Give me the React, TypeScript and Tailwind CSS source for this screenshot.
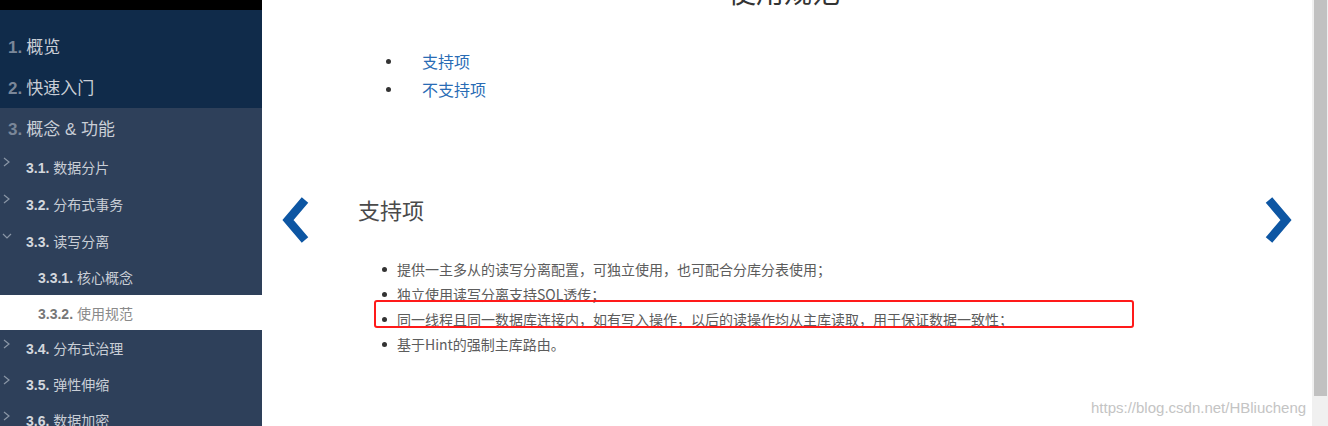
import React from 'react';

const cjk = { fontFamily: '"Noto Sans CJK SC", "Noto Sans", sans-serif' };
const mixed = { fontFamily: '"Liberation Sans", "Noto Sans CJK SC", sans-serif' };

type Sub = { num: string; label: string; chevron?: 'right' | 'down'; indent?: boolean; active?: boolean; h: string };

const subs: Sub[] = [
  { num: '3.1.', label: '数据分片', chevron: 'right', h: 'h-[37px]' },
  { num: '3.2.', label: '分布式事务', chevron: 'right', h: 'h-[37px]' },
  { num: '3.3.', label: '读写分离', chevron: 'down', h: 'h-[37px]' },
  { num: '3.3.1.', label: '核心概念', indent: true, h: 'h-[36px]' },
  { num: '3.3.2.', label: '使用规范', indent: true, active: true, h: 'h-[35px]' },
  { num: '3.4.', label: '分布式治理', chevron: 'right', h: 'h-[36px]' },
  { num: '3.5.', label: '弹性伸缩', chevron: 'right', h: 'h-[36px]' },
  { num: '3.6.', label: '数据加密', chevron: 'right', h: 'h-[36px]' },
];

const items = [
  '提供一主多从的读写分离配置，可独立使用，也可配合分库分表使用；',
  '独立使用读写分离支持SQL透传；',
  '同一线程且同一数据库连接内，如有写入操作，以后的读操作均从主库读取，用于保证数据一致性；',
  '基于Hint的强制主库路由。',
];

function Chevron({ dir }: { dir: 'right' | 'down' }) {
  return (
    <svg width="10" height="10" viewBox="0 0 10 10" className="absolute left-[2px] top-[9px]">
      {dir === 'right' ? (
        <polyline points="2,1 7,5 2,9" fill="none" stroke="#8a96a6" strokeWidth="1.2" />
      ) : (
        <polyline points="1,3 5,7 9,3" fill="none" stroke="#8a96a6" strokeWidth="1.2" />
      )}
    </svg>
  );
}

function Sidebar() {
  return (
    <aside className="w-[262px] shrink-0 flex flex-col overflow-hidden bg-[#2e405a]" style={mixed}>
      <div className="h-[10px] shrink-0 bg-black" />
      <div className="shrink-0 bg-[#102b4a] pt-[16px]">
        <div className="h-[41px] flex items-center pt-[3px] pl-[8px] text-[17px]">
          <span className="text-[#7a8799] font-bold mr-[4px]">1.</span>
          <span className="text-[#c9ced6]">概览</span>
        </div>
        <div className="h-[41px] flex items-center pt-[3px] pl-[8px] text-[17px]">
          <span className="text-[#7a8799] font-bold mr-[4px]">2.</span>
          <span className="text-[#c9ced6]">快速入门</span>
        </div>
      </div>
      <div className="h-[40px] shrink-0 flex items-center pt-[3px] pl-[8px] text-[17px]">
        <span className="text-[#7a8799] font-bold mr-[4px]">3.</span>
        <span className="text-[#c9ced6]">概念 &amp; 功能</span>
      </div>
      {subs.map((s) => (
        <div
          key={s.num}
          className={
            'relative flex items-center pt-[3px] text-[14px] shrink-0 ' +
            s.h +
            (s.active ? ' bg-white ' : ' ') +
            (s.indent ? 'pl-[38px]' : 'pl-[26px]')
          }
        >
          {s.chevron && <Chevron dir={s.chevron} />}
          <span className={'font-bold mr-[4px] ' + (s.active ? 'text-[#777777]' : 'text-[#d3d7dd]')}>{s.num}</span>
          <span className={s.active ? 'text-[#8a8a8a]' : 'text-[#c9ced6]'}>{s.label}</span>
        </div>
      ))}
    </aside>
  );
}

function NavArrow({ dir }: { dir: 'left' | 'right' }) {
  return (
    <svg width="32" height="48" viewBox="0 0 32 48">
      {dir === 'left' ? (
        <polyline points="25,4 8,24 25,44" fill="none" stroke="#0d56a3" strokeWidth="8.5" strokeLinejoin="miter" />
      ) : (
        <polyline points="7,4 24,24 7,44" fill="none" stroke="#0d56a3" strokeWidth="8.5" strokeLinejoin="miter" />
      )}
    </svg>
  );
}

function Content() {
  return (
    <main className="relative flex-1 bg-white" style={cjk}>
      <h1 className="-mt-[30px] h-[42px] text-center text-[28px] leading-[42px] text-[#333333] font-normal pr-[6px]">使用规范</h1>
      <ul className="mt-[35px] pl-[124px] text-[16px] leading-[28px] text-[#2a6cb5]">
        <li className="flex items-center">
          <span className="w-[5px] h-[5px] rounded-full bg-[#333333] mr-[31px]" />
          支持项
        </li>
        <li className="flex items-center">
          <span className="w-[5px] h-[5px] rounded-full bg-[#333333] mr-[31px]" />
          不支持项
        </li>
      </ul>
      <h2 className="mt-[90px] pl-[96px] text-[22px] leading-[32px] text-[#4a4a4a] font-normal">支持项</h2>
      <ul className="mt-[32px] pl-[120px] text-[14px] leading-[25px] text-[#5c5c5c]">
        {items.map((t) => (
          <li key={t} className="flex items-center">
            <span className="w-[5px] h-[5px] rounded-full bg-[#333333] mr-[10px] shrink-0" />
            {t}
          </li>
        ))}
      </ul>
      <div className="absolute left-[18px] top-[196px]">
        <NavArrow dir="left" />
      </div>
      <div className="absolute left-[1000px] top-[196px]">
        <NavArrow dir="right" />
      </div>
      <div className="absolute left-[112px] top-[300px] w-[760px] h-[28px] border-2 border-[#ff1a1a] rounded-[3px]" />
    </main>
  );
}

export default function App() {
  return (
    <div className="relative w-[1328px] h-[426px] flex overflow-hidden bg-white">
      <Sidebar />
      <Content />
      <div className="w-[16px] shrink-0 bg-[#f0f0f0] flex justify-center">
        <div className="w-[13px] h-[396px] bg-[#c1c1c1]" />
      </div>
      <div
        className="absolute left-[1091px] top-[398px] text-[15px] leading-[20px] text-[#c4c4c4]"
        style={{ fontFamily: '"Liberation Sans", Arial, sans-serif' }}
      >
        https://blog.csdn.net/HBliucheng
      </div>
    </div>
  );
}
